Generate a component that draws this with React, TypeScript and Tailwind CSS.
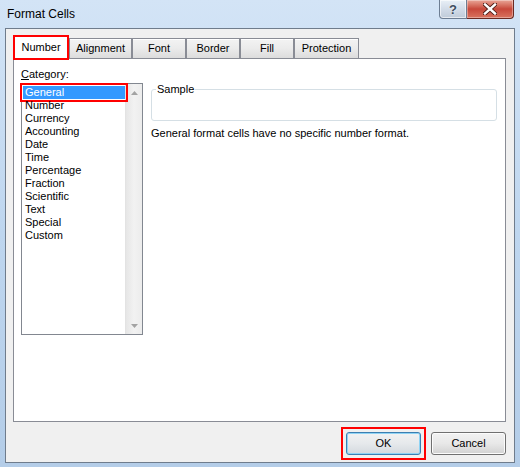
import * as React from "react";

const categories = [
  "General", "Number", "Currency", "Accounting", "Date", "Time",
  "Percentage", "Fraction", "Scientific", "Text", "Special", "Custom",
]

const tabs = [
  { name: "Alignment", w: "w-[63px]" },
  { name: "Font", w: "w-[54px]" },
  { name: "Border", w: "w-[54px]" },
  { name: "Fill", w: "w-[54px]" },
  { name: "Protection", w: "w-[65px]" },
]

const TitleButtons = () => (
  <div className="flex self-start pr-[6px]">
    <div className="flex items-center justify-center w-[28px] h-[19px] border border-[#6d7e93] border-t-0 rounded-bl-[4px] bg-gradient-to-b from-[#e9f0f7] via-[#d2dce8] to-[#bfcbd9] shadow-[inset_0_0_0_1px_rgba(255,255,255,0.6)]">
      <span className="text-[13px] font-bold leading-none text-[#3e4d5e] [text-shadow:0_0_2px_#fff]">?</span>
    </div>
    <div className="flex items-center justify-center w-[47px] h-[19px] border border-[#6b2a22] border-t-0 border-l-0 rounded-br-[4px] bg-gradient-to-b from-[#e8a597] via-[#c7473a] to-[#d8735f] shadow-[inset_0_0_0_1px_rgba(255,255,255,0.35)]">
      <svg width="14" height="12" viewBox="0 0 14 12">
        <path d="M2 1.5 L12 10.5 M12 1.5 L2 10.5" stroke="#4a1a14" strokeWidth="4.2" strokeLinecap="square" />
        <path d="M2 1.5 L12 10.5 M12 1.5 L2 10.5" stroke="#ffffff" strokeWidth="2.4" strokeLinecap="square" />
      </svg>
    </div>
  </div>
)

const ScrollArrow = ({ down }: { down?: boolean }) => (
  <div className="flex items-center justify-center h-[17px]">
    <svg width="7" height="4" viewBox="0 0 7 4">
      <path d={down ? "M0 0 L7 0 L3.5 4 Z" : "M3.5 0 L7 4 L0 4 Z"} fill="#a3a3a3" />
    </svg>
  </div>
)

const CategoryList = () => (
  <div className="flex w-[122px] h-[252px] border border-[#828790] bg-white">
    <div className="relative z-10 flex flex-col flex-1 pt-[2px] pl-[1px]">
      {categories.map((name, i) => (
        <div
          key={name}
          className={i === 0
            ? "h-[13px] leading-[13px] pl-[2px] bg-[#3399ff] text-white outline-2 outline-[#ff0000] outline-offset-[1px]"
            : "h-[13px] leading-[13px] pl-[2px] text-black"}
        >
          {name}
        </div>
      ))}
    </div>
    <div className="flex flex-col justify-between w-[17px] bg-gradient-to-r from-[#e6e6e6] via-[#f2f2f2] to-[#ececec] border-l border-[#e3e3e3]">
      <ScrollArrow />
      <ScrollArrow down />
    </div>
  </div>
)

const Button = ({ label, primary }: { label: string, primary?: boolean }) => (
  <button
    className={primary
      ? "w-[75px] h-[23px] rounded-[3px] border border-[#3c7fb1] bg-gradient-to-b from-[#f2f2f2] via-[#e6e9ec] to-[#d4d9de] shadow-[inset_0_0_0_1px_#8fd3f4] text-black"
      : "w-[75px] h-[23px] rounded-[3px] border border-[#707070] bg-gradient-to-b from-[#f2f2f2] via-[#e8e8e8] to-[#d2d2d2] shadow-[inset_0_0_0_1px_#fcfcfc] text-black"}
  >
    {label}
  </button>
)

export default function App() {
  return (
    <div className="w-[520px] h-[467px] flex flex-col bg-gradient-to-b from-[#d3e4f6] via-[#bed6ef] to-[#b4cde8] text-[11px] text-black font-['Liberation_Sans',Arial,sans-serif]">
      <div className="flex items-center justify-between h-[28px] shrink-0">
        <span className="pl-[7px] text-[12px] text-black">Format Cells</span>
        <TitleButtons />
      </div>

      <div className="flex flex-col mx-[5px] h-[435px] border border-[#6f7c8c] bg-[#f0f0f0] pt-[6px] pl-[7px] pr-[8px]">
        <div className="relative z-10 flex items-end h-[23px]">
          <div className="flex items-center justify-center w-[56px] h-[25px] -mb-[2px] border-2 border-[#ff0000] bg-white">
            Number
          </div>
          {tabs.map(tab => (
            <div
              key={tab.name}
              className={`flex items-center justify-center ${tab.w} h-[20px] border border-b-0 border-[#898c95] bg-gradient-to-b from-[#f3f3f3] via-[#ebebeb] to-[#dcdcdc] shadow-[inset_0_1px_0_#fff]`}
            >
              {tab.name}
            </div>
          ))}
        </div>

        <div className="flex h-[364px] border border-[#898c95] bg-white">
          <div className="flex flex-col pl-[7px] pt-[8px]">
            <div className="h-[16px] leading-[14px]"><span className="underline">C</span>ategory:</div>
            <CategoryList />
          </div>
          <div className="flex flex-col flex-1 pl-[8px] pr-[8px] pt-[30px]">
            <div className="relative h-[32px] rounded-[3px] border border-[#d5dfe5]">
              <span className="absolute left-[4px] -top-[8px] px-[1px] bg-white leading-[14px]">Sample</span>
            </div>
            <div className="pt-[5px] leading-[14px]">General format cells have no specific number format.</div>
          </div>
        </div>

        <div className="flex justify-end items-center gap-[10px] mt-[10px]">
          <div className="-my-[5px] mr-[-5px] p-[3px] border-2 border-[#ff0000]">
            <Button label="OK" primary />
          </div>
          <Button label="Cancel" />
        </div>
      </div>
    </div>
  )
}
